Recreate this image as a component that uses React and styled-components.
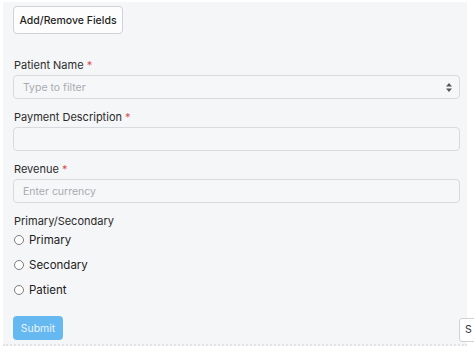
import styled, { createGlobalStyle } from 'styled-components';

const Global = createGlobalStyle`
  html, body {
    margin: 0;
    padding: 0;
    background: #ffffff;
  }
  * {
    box-sizing: border-box;
    font-family: Inter, "Liberation Sans", sans-serif;
  }
`;

const Page = styled.div`
  width: 474px;
  height: 347px;
  overflow: hidden;
  display: flex;
  padding: 2px 0 0 3px;
`;

const Panel = styled.div`
  width: 464px;
  height: 344px;
  background: #f5f6f8;
  border-bottom: 2px dotted #e1e3e7;
  padding: 4px 7px 0 10px;
  display: flex;
  flex-direction: column;
  > * {
    flex-shrink: 0;
  }
`;

const ToolButton = styled.button`
  align-self: flex-start;
  width: 110px;
  height: 28px;
  padding: 0;
  background: #fdfdfd;
  border: 1px solid #d0d2d6;
  border-radius: 4px;
  color: #1f1f1f;
  font-size: 10.5px;
  font-weight: 500;
  margin-bottom: 24px;
`;

const Field = styled.div`
  display: flex;
  flex-direction: column;
  gap: 3px;
  margin-bottom: 11px;
`;

const Label = styled.label`
  font-size: 11px;
  color: #2b2b2b;
  line-height: 14px;
  padding-left: 1px;
  span {
    color: #d9534f;
  }
`;

const InputBox = styled.div`
  position: relative;
  height: 24px;
  border: 1px solid #d8dadd;
  border-radius: 4px;
  background: #f6f7f9;
  display: flex;
  align-items: center;
  padding: 0 9px;
  font-size: 10.5px;
  color: #a9abaf;
`;

const Arrows = styled.svg`
  position: absolute;
  right: 6px;
  top: 6px;
`;

const RadioGroup = styled.div`
  display: flex;
  flex-direction: column;
  gap: 9px;
  margin-top: 4px;
`;

const RadioRow = styled.label`
  display: flex;
  align-items: center;
  gap: 5px;
  font-size: 11.5px;
  color: #222;
  line-height: 16px;
  padding-left: 1px;
`;

const Circle = styled.span`
  width: 10px;
  height: 10px;
  border-radius: 50%;
  border: 1px solid #7a7c80;
  background: #fff;
`;

const Footer = styled.div`
  margin-top: 18px;
  display: flex;
  justify-content: space-between;
`;

const SubmitButton = styled.button`
  width: 50px;
  height: 24px;
  border: none;
  border-radius: 4px;
  background: ${p => (p.disabled ? '#66b8f0' : '#1e90ff')};
  color: #e9f5fe;
  font-size: 10.5px;
  padding: 0;
`;

const Peek = styled.div`
  width: 20px;
  height: 24px;
  margin-top: 2px;
  margin-right: -19px;
  background: #fff;
  border: 1px solid #d0d2d6;
  border-radius: 3px;
  padding-left: 5px;
  font-size: 10.5px;
  line-height: 22px;
  color: #334;
  overflow: hidden;
`;

export default function App() {
  return (
    <Page>
      <Global />
      <Panel>
        <ToolButton>Add/Remove Fields</ToolButton>
        <Field>
          <Label>Patient Name <span>*</span></Label>
          <InputBox>
            Type to filter
            <Arrows width="8" height="11" viewBox="0 0 8 11">
              <path d="M4 1 L7 4.5 L1 4.5 Z" fill="#555" />
              <path d="M4 10 L7 6.5 L1 6.5 Z" fill="#555" />
            </Arrows>
          </InputBox>
        </Field>
        <Field>
          <Label>Payment Description <span>*</span></Label>
          <InputBox />
        </Field>
        <Field>
          <Label>Revenue <span>*</span></Label>
          <InputBox>Enter currency</InputBox>
        </Field>
        <Label>Primary/Secondary</Label>
        <RadioGroup>
          {['Primary', 'Secondary', 'Patient'].map(o => (
            <RadioRow key={o}>
              <Circle />
              {o}
            </RadioRow>
          ))}
        </RadioGroup>
        <Footer>
          <SubmitButton disabled>Submit</SubmitButton>
          <Peek>S</Peek>
        </Footer>
      </Panel>
    </Page>
  );
}
